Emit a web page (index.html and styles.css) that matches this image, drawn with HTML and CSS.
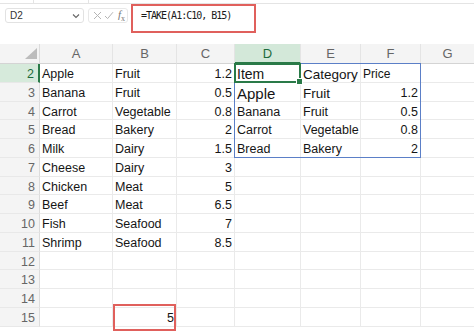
FILE: index.html
```html
<!DOCTYPE html>
<html lang="en">
<head>
  <meta charset="UTF-8">
  <title>TAKE example</title>
  <link rel="stylesheet" href="styles.css">
</head>
<body>
  <!-- ribbon remnant -->
  <div class="ribbon">
    <span class="rib-a"></span>
    <span class="rib-b"></span>
  </div>

  <!-- formula bar -->
  <div class="formula-bar">
    <div class="namebox">
      <span>D2</span>
      <svg width="8" height="6" viewBox="0 0 8 6"><path d="M1 1.5 L4 4.5 L7 1.5" fill="none" stroke="#666" stroke-width="1.1"/></svg>
    </div>
    <div class="fxbox">
      <svg width="9" height="9" viewBox="0 0 9 9"><path d="M1 1 L8 8 M8 1 L1 8" stroke="#b5b5b5" stroke-width="1"/></svg>
      <svg width="10" height="9" viewBox="0 0 10 9"><path d="M1 5 L3.6 7.6 L9 1.2" fill="none" stroke="#b5b5b5" stroke-width="1"/></svg>
      <span class="fx"><i>f</i><sub>x</sub></span>
    </div>
    <div class="formula">=TAKE(A1:C10, B15)</div>
  </div>

  <div class="sheet">
    <!-- header row -->
    <div class="corner"><svg width="12" height="11" viewBox="0 0 12 11"><path d="M12 0 L12 11 L0 11 Z" fill="#bcbcbc"/></svg></div>
    <div class="ch">A</div>
    <div class="ch">B</div>
    <div class="ch">C</div>
    <div class="ch ch-sel">D</div>
    <div class="ch">E</div>
    <div class="ch">F</div>
    <div class="ch">G</div>

    <div class="rh rh-sel">2</div>
    <div class="c">Apple</div><div class="c">Fruit</div><div class="c num">1.2</div>
    <div class="c s14">Item</div><div class="c s13">Category</div><div class="c s12">Price</div><div class="c"></div>

    <div class="rh">3</div>
    <div class="c">Banana</div><div class="c">Fruit</div><div class="c num">0.5</div>
    <div class="c s15">Apple</div><div class="c s13">Fruit</div><div class="c num">1.2</div><div class="c"></div>

    <div class="rh">4</div>
    <div class="c">Carrot</div><div class="c">Vegetable</div><div class="c num">0.8</div>
    <div class="c">Banana</div><div class="c">Fruit</div><div class="c num">0.5</div><div class="c"></div>

    <div class="rh">5</div>
    <div class="c">Bread</div><div class="c">Bakery</div><div class="c num">2</div>
    <div class="c">Carrot</div><div class="c">Vegetable</div><div class="c num">0.8</div><div class="c"></div>

    <div class="rh">6</div>
    <div class="c">Milk</div><div class="c">Dairy</div><div class="c num">1.5</div>
    <div class="c">Bread</div><div class="c">Bakery</div><div class="c num">2</div><div class="c"></div>

    <div class="rh">7</div>
    <div class="c">Cheese</div><div class="c">Dairy</div><div class="c num">3</div>
    <div class="c"></div><div class="c"></div><div class="c"></div><div class="c"></div>

    <div class="rh">8</div>
    <div class="c">Chicken</div><div class="c">Meat</div><div class="c num">5</div>
    <div class="c"></div><div class="c"></div><div class="c"></div><div class="c"></div>

    <div class="rh">9</div>
    <div class="c">Beef</div><div class="c">Meat</div><div class="c num">6.5</div>
    <div class="c"></div><div class="c"></div><div class="c"></div><div class="c"></div>

    <div class="rh">10</div>
    <div class="c">Fish</div><div class="c">Seafood</div><div class="c num">7</div>
    <div class="c"></div><div class="c"></div><div class="c"></div><div class="c"></div>

    <div class="rh">11</div>
    <div class="c">Shrimp</div><div class="c">Seafood</div><div class="c num">8.5</div>
    <div class="c"></div><div class="c"></div><div class="c"></div><div class="c"></div>

    <div class="rh">12</div>
    <div class="c"></div><div class="c"></div><div class="c"></div>
    <div class="c"></div><div class="c"></div><div class="c"></div><div class="c"></div>

    <div class="rh">13</div>
    <div class="c"></div><div class="c"></div><div class="c"></div>
    <div class="c"></div><div class="c"></div><div class="c"></div><div class="c"></div>

    <div class="rh">14</div>
    <div class="c"></div><div class="c"></div><div class="c"></div>
    <div class="c"></div><div class="c"></div><div class="c"></div><div class="c"></div>

    <div class="rh">15</div>
    <div class="c"></div><div class="c num">5</div><div class="c"></div>
    <div class="c"></div><div class="c"></div><div class="c"></div><div class="c"></div>

    <!-- overlays drawn over their grid areas -->
    <div class="spill"></div>
    <div class="active"><span class="handle"></span></div>
    <div class="mark"></div>
  </div>
</body>
</html>
```

FILE: styles.css
```css
body {
  margin: 0;
  width: 474px;
  height: 333px;
  overflow: hidden;
  background: #fff;
  font-family: "Liberation Sans", Arial, sans-serif;
  color: #151515;
}

/* top strip */
.ribbon {
  height: 3px;
  border-bottom: 1px solid #e4e4e4;
  display: flex;
}
.rib-a {
  width: 33px;
  border-right: 1px solid #e4e4e4;
}
.rib-b {
  width: 54px;
  border-right: 1px solid #e4e4e4;
}

/* formula bar */
.formula-bar {
  height: 33px;
  display: flex;
  align-items: flex-start;
}
.namebox {
  margin: 4px 0 0 5px;
  width: 79px;
  height: 15px;
  box-sizing: border-box;
  border: 1px solid #e2e2e2;
  border-radius: 3px;
  display: flex;
  align-items: center;
  justify-content: space-between;
  padding: 0 3px 0 4px;
  font-size: 10px;
  color: #333;
}
.fxbox {
  margin: 4px 0 0 4px;
  width: 40px;
  height: 15px;
  box-sizing: border-box;
  border: 1px solid #e8e8e8;
  border-radius: 3px;
  display: flex;
  align-items: center;
  gap: 2px;
  padding-left: 4px;
}
.fx {
  font-family: "Liberation Serif", serif;
  font-size: 11px;
  color: #777;
  margin-left: 2px;
}
.fx sub {
  font-size: 8px;
}
.formula {
  margin-left: 3px;
  width: 125px;
  height: 29px;
  box-sizing: border-box;
  border: 2px solid #e0605c;
  padding: 4px 0 0 8px;
  font-family: "DejaVu Sans Mono", "Liberation Mono", monospace;
  font-size: 10px;
  letter-spacing: -1px;
  color: #1a1a1a;
}

/* sheet grid */
.sheet {
  margin-top: 7px;
  display: grid;
  grid-template-columns: 40px 73px 64px 58px 66px 60px 60px 54px;
  grid-template-rows: 20px repeat(14, 18.75px);
  position: relative;
}
.corner {
  background: #f4f4f4;
  border-bottom: 1px solid #d4d4d4;
  border-right: 1px solid #dcdcdc;
  box-sizing: border-box;
  display: flex;
  align-items: flex-end;
  justify-content: flex-end;
  padding: 0 2px 4px 0;
}
.ch {
  background: #f4f4f4;
  border-bottom: 1px solid #d4d4d4;
  border-right: 1px solid #e4e4e4;
  box-sizing: border-box;
  text-align: center;
  font-size: 13px;
  line-height: 19px;
  color: #666;
}
.ch-sel {
  background: #d3e8d9;
  color: #1d6b3c;
  border-bottom: 2px solid #2a7a48;
}
.rh {
  background: #f4f4f4;
  border-right: 1px solid #dcdcdc;
  border-bottom: 1px solid #e8e8e8;
  box-sizing: border-box;
  text-align: right;
  padding: 2px 4px 0 0;
  font-size: 12.5px;
  line-height: 17px;
  color: #666;
}
.rh-sel {
  background: #d6eadb;
  color: #1d6b3c;
  border-right: 2px solid #2a7a48;
}
.c {
  border-right: 1px solid #eaeaea;
  border-bottom: 1px solid #eaeaea;
  box-sizing: border-box;
  padding: 2px 2px 0;
  font-size: 12.5px;
  line-height: 17px;
  white-space: nowrap;
}
.num {
  text-align: right;
}
.s12 { font-size: 12px; }
.s13 { font-size: 13.5px; }
.s14 { font-size: 14px; }
.s15 { font-size: 15px; }

/* overlays: absolute children of the grid, sized by their grid area */
.spill,
.active,
.mark {
  position: absolute;
  box-sizing: border-box;
  pointer-events: none;
}
.spill {
  grid-column: 5 / 8;
  grid-row: 2 / 7;
  top: -1px;
  left: -1px;
  right: 0;
  bottom: 0;
  border: 1px solid #5b7fc7;
}
.active {
  grid-column: 5 / 6;
  grid-row: 2 / 3;
  top: -1px;
  left: -1px;
  right: 0;
  bottom: 0;
  border: 2px solid #2a7a48;
}
.handle {
  position: absolute;
  right: -4px;
  bottom: -4px;
  width: 5px;
  height: 5px;
  background: #2a7a48;
  border: 1px solid #fff;
}
.mark {
  grid-column: 3 / 4;
  grid-row: 15 / 16;
  top: -4px;
  left: 0;
  right: 1px;
  bottom: -4px;
  border: 2px solid #e0605c;
}
```
